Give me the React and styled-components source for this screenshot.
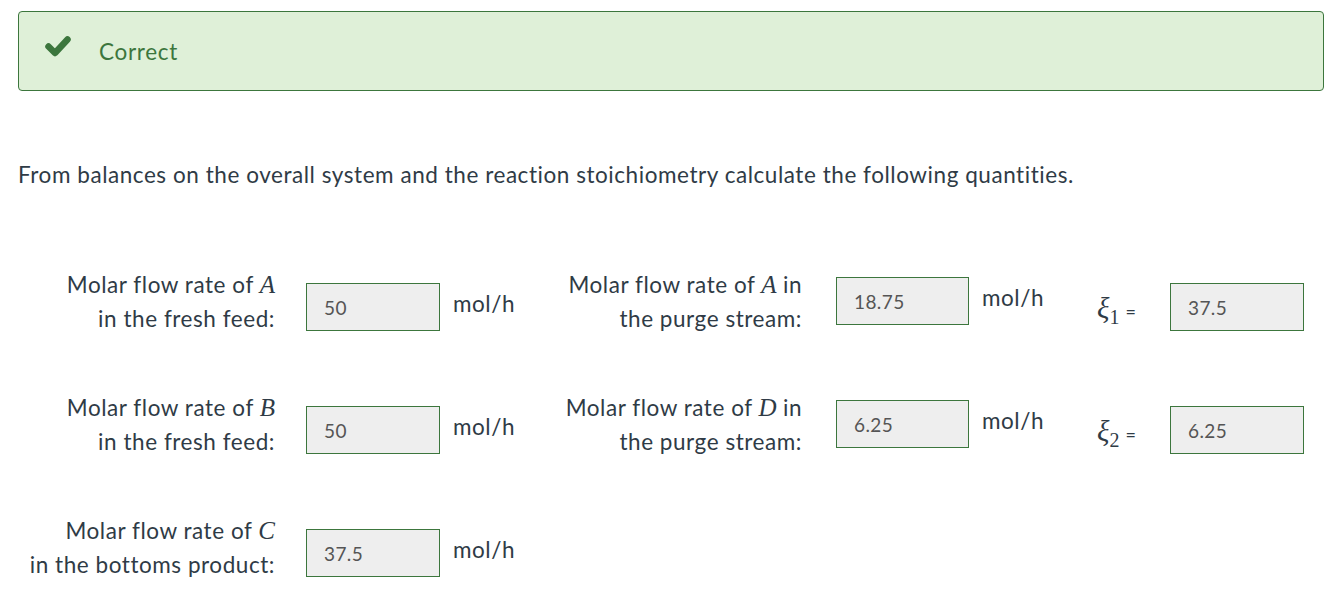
import React from 'react';
import styled, { createGlobalStyle } from 'styled-components';

const GlobalStyle = createGlobalStyle`
	html, body {
		margin: 0;
		padding: 0;
		background: #fff;
	}
	body {
		font-family: Lato, 'Open Sans', sans-serif;
		color: #2f3b46;
	}
`;

const Page = styled.div`
	width: 1336px;
	height: 595px;
	padding: 11px 12px 0 18px;
	box-sizing: border-box;
	overflow: hidden;
`;

const Alert = styled.div`
	display: flex;
	align-items: center;
	height: 80px;
	box-sizing: border-box;
	border: 1px solid #3c763d;
	border-radius: 4px;
	background: #dff0d8;
	padding: 0 0 0 25px;
	color: #3c763d;
`;

const CheckIcon = styled.svg`
	width: 28px;
	height: 24px;
	margin-top: -10px;
	fill: none;
	stroke: #3c763d;
	stroke-width: 6.5px;
	stroke-linecap: round;
	stroke-linejoin: round;
`;

const AlertText = styled.span`
	font-size: 22.5px;
	letter-spacing: 0.7px;
	margin-left: 27px;
`;

const Intro = styled.p`
	margin: 67px 0 0 0;
	font-size: 22.5px;
	letter-spacing: 0.55px;
	line-height: 34px;
`;

const Rows = styled.div`
	margin-top: 76px;
	display: flex;
	flex-direction: column;
	gap: 55px;
`;

const Row = styled.div`
	display: flex;
	align-items: flex-start;
	height: 68px;
`;

const Label = styled.div`
	width: ${p => p.$w}px;
	text-align: right;
	font-size: 22.5px;
	letter-spacing: 0.55px;
	line-height: 34px;
	flex-shrink: 0;
	white-space: nowrap;
`;

const M = styled.span`
	font-family: 'Liberation Serif', 'DejaVu Serif', serif;
	font-style: italic;
	font-size: 25px;
	letter-spacing: 0;
`;

const Field = styled.div`
	width: ${p => p.$w}px;
	height: 48px;
	box-sizing: border-box;
	margin-top: ${p => p.$top}px;
	margin-left: ${p => p.$left}px;
	border: 1px solid #3c763d;
	background: #eeeeee;
	color: #555;
	font-size: 19px;
	letter-spacing: 0.4px;
	display: flex;
	align-items: center;
	padding-left: 17px;
	flex-shrink: 0;
`;

const Unit = styled.div`
	width: ${p => p.$w}px;
	padding-left: 13px;
	box-sizing: border-box;
	margin-top: ${p => p.$top}px;
	font-size: 22.5px;
	letter-spacing: 0.55px;
	line-height: 24px;
	flex-shrink: 0;
`;

const Xi = styled.div`
	width: 84px;
	padding-left: 11px;
	box-sizing: border-box;
	margin-top: 24px;
	flex-shrink: 0;
	font-size: 18px;
	white-space: nowrap;
`;

const XiSym = styled.span`
	font-family: 'Liberation Serif', 'DejaVu Serif', serif;
	font-style: italic;
	font-size: 29px;
`;

const Sub = styled.sub`
	font-family: 'Liberation Serif', 'DejaVu Serif', serif;
	font-size: 20px;
	vertical-align: -6px;
	margin-right: 6px;
`;

const rows = [
	{
		l1: ['Molar flow rate of ', 'A', '', 'in the fresh feed:'],
		v1: '50',
		l2: ['Molar flow rate of ', 'A', ' in', 'the purge stream:'],
		v2: '18.75',
		xi: '1',
		v3: '37.5'
	},
	{
		l1: ['Molar flow rate of ', 'B', '', 'in the fresh feed:'],
		v1: '50',
		l2: ['Molar flow rate of ', 'D', ' in', 'the purge stream:'],
		v2: '6.25',
		xi: '2',
		v3: '6.25'
	},
	{
		l1: ['Molar flow rate of ', 'C', '', 'in the bottoms product:'],
		v1: '37.5'
	}
];

const LabelText = ({ parts, w }) => (
	<Label $w={w}>
		{parts[0]}
		<M>{parts[1]}</M>
		{parts[2]}
		<br />
		{parts[3]}
	</Label>
);

export default function App() {
	return (
		<Page>
			<GlobalStyle />
			<Alert>
				<CheckIcon viewBox='0 0 28 24'>
					<polyline points='4.5,12.5 11,19 23.5,5.5' />
				</CheckIcon>
				<AlertText>Correct</AlertText>
			</Alert>
			<Intro>
				From balances on the overall system and the reaction stoichiometry calculate the following
				quantities.
			</Intro>
			<Rows>
				{rows.map((r, i) => (
					<Row key={i}>
						<LabelText parts={r.l1} w={257} />
						<Field $w={134} $top={15} $left={31}>
							{r.v1}
						</Field>
						<Unit $w={100} $top={24}>
							mol/h
						</Unit>
						{r.l2 && (
							<>
								<LabelText parts={r.l2} w={262} />
								<Field $w={133} $top={9} $left={34}>
									{r.v2}
								</Field>
								<Unit $w={117} $top={18}>
									mol/h
								</Unit>
								<Xi>
									<XiSym>ξ</XiSym>
									<Sub>{r.xi}</Sub>=
								</Xi>
								<Field $w={134} $top={15} $left={0}>
									{r.v3}
								</Field>
							</>
						)}
					</Row>
				))}
			</Rows>
		</Page>
	);
}
